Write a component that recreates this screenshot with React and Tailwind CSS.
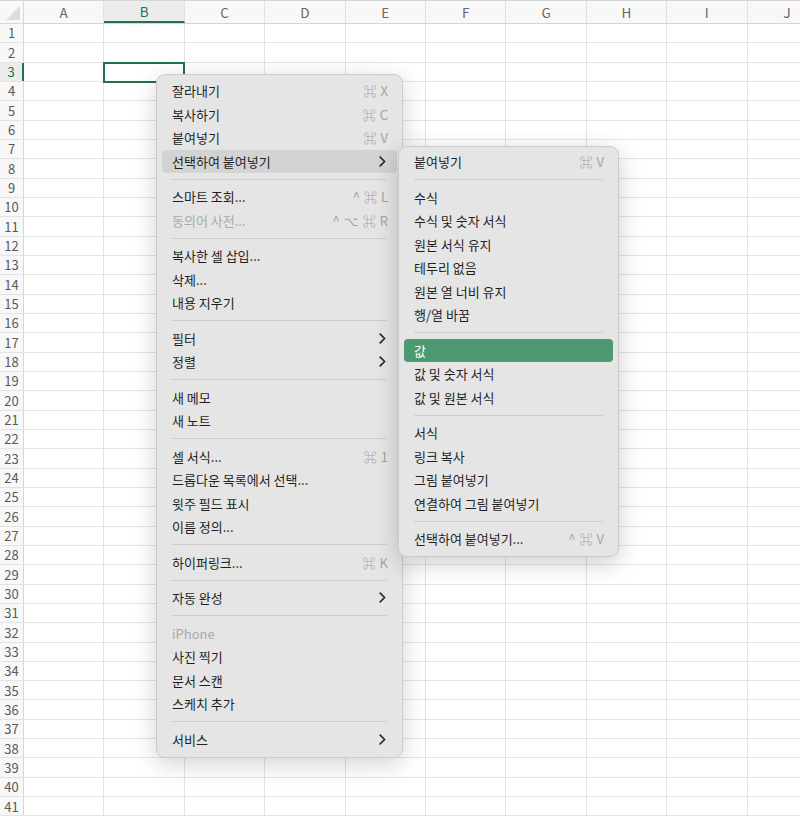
import React from 'react';

const COLS = ['A', 'B', 'C', 'D', 'E', 'F', 'G', 'H', 'I', 'J'];
const ROWS = Array.from({ length: 41 }, (_, i) => i + 1);

const FONT = { fontFamily: '"Noto Sans CJK KR", "DejaVu Sans", sans-serif' };

const Chevron = ({ white }) => (
  <svg width="7" height="11" viewBox="0 0 7 11" className="mr-[2px]">
    <polyline points="1.2,1.2 5.6,5.5 1.2,9.8" fill="none" stroke={white ? '#fff' : '#2a2a2a'} strokeWidth="1.7" strokeLinecap="round" strokeLinejoin="round" />
  </svg>
);

const Shortcut = ({ keys }) => (
  <span className="flex items-center gap-[4px] text-[13px] text-[#a3a3a3]">
    {keys.map((k, i) => (
      <span key={i}>{k}</span>
    ))}
  </span>
);

const Item = ({ label, sc, sub, disabled, active, green }) => (
  <div
    className={`h-[23.5px] mx-[5px] pl-[10px] pr-[9px] flex items-center justify-between rounded-[4px] text-[13px] ${
      green ? 'bg-[#4d9a72] text-white' : active ? 'bg-[#d3d3d3] text-[#1f1f1f]' : disabled ? 'text-[#a9a9a9]' : 'text-[#1f1f1f]'
    }`}
  >
    <span>{label}</span>
    {sc && <Shortcut keys={sc} />}
    {sub && <Chevron white={green} />}
  </div>
);

const Sep = () => (
  <div className="h-[12px] flex items-center px-[15px]">
    <div className="h-px w-full bg-[#cdcdcd]" />
  </div>
);

export default function App() {
  return (
    <div className="relative w-[800px] h-[816px] overflow-hidden bg-white select-none" style={FONT}>
      {/* column header */}
      <div className="flex h-[24px] border-t border-b border-[#d6d6d6] bg-[#f8f8f8]">
        <div className="w-[24px] shrink-0 border-r border-[#d6d6d6] relative">
          <div className="absolute right-[3px] bottom-[3px] w-0 h-0 border-l-[14px] border-l-transparent border-b-[14px] border-b-[#dcdcdc]" />
        </div>
        {COLS.map((c) => (
          <div
            key={c}
            className={`w-[80.4px] shrink-0 flex items-center justify-center text-[13.5px] border-r border-[#e0e0e0] ${
              c === 'B' ? 'bg-[#ececec] text-[#217346] border-b-2 border-b-[#217346]' : 'text-[#666]'
            }`}
          >
            {c}
          </div>
        ))}
      </div>

      {/* rows */}
      {ROWS.map((r) => (
        <div key={r} className="flex h-[19.33px] border-b border-[#e3e3e3]">
          <div
            className={`w-[24px] shrink-0 flex items-center justify-center text-[13px] border-r ${
              r === 3 ? 'bg-[#ececec] text-[#217346] border-r-2 border-r-[#217346]' : 'bg-[#f8f8f8] text-[#5a5a5a] border-[#d6d6d6]'
            }`}
          >
            {r}
          </div>
          {COLS.map((c) => (
            <div key={c} className="w-[80.4px] shrink-0 border-r border-[#e3e3e3]" />
          ))}
        </div>
      ))}

      {/* selected cell B3 */}
      <div className="absolute left-[103px] top-[62px] w-[82px] h-[21px] border-2 border-[#217346]" />

      {/* context menu */}
      <div className="absolute left-[156px] top-[74px] w-[247px] pt-[4px] pb-[6px] rounded-[9px] bg-[#e5e5e5] border border-[#cbcbcb] shadow-[0_6px_24px_rgba(0,0,0,0.18)]">
        <Item label="잘라내기" sc={['⌘', 'X']} />
        <Item label="복사하기" sc={['⌘', 'C']} />
        <Item label="붙여넣기" sc={['⌘', 'V']} />
        <Item label="선택하여 붙여넣기" sub active />
        <Sep />
        <Item label="스마트 조회..." sc={['^', '⌘', 'L']} />
        <Item label="동의어 사전..." sc={['^', '⌥', '⌘', 'R']} disabled />
        <Sep />
        <Item label="복사한 셀 삽입..." />
        <Item label="삭제..." />
        <Item label="내용 지우기" />
        <Sep />
        <Item label="필터" sub />
        <Item label="정렬" sub />
        <Sep />
        <Item label="새 메모" />
        <Item label="새 노트" />
        <Sep />
        <Item label="셀 서식..." sc={['⌘', '1']} />
        <Item label="드롭다운 목록에서 선택..." />
        <Item label="윗주 필드 표시" />
        <Item label="이름 정의..." />
        <Sep />
        <Item label="하이퍼링크..." sc={['⌘', 'K']} />
        <Sep />
        <Item label="자동 완성" sub />
        <Sep />
        <Item label="iPhone" disabled />
        <Item label="사진 찍기" />
        <Item label="문서 스캔" />
        <Item label="스케치 추가" />
        <Sep />
        <Item label="서비스" sub />
      </div>

      {/* submenu */}
      <div className="absolute left-[398px] top-[146px] w-[221px] pt-[3px] pb-[5px] rounded-[9px] bg-[#e5e5e5] border border-[#cbcbcb] shadow-[0_6px_24px_rgba(0,0,0,0.2)]">
        <Item label="붙여넣기" sc={['⌘', 'V']} />
        <Sep />
        <Item label="수식" />
        <Item label="수식 및 숫자 서식" />
        <Item label="원본 서식 유지" />
        <Item label="테두리 없음" />
        <Item label="원본 열 너비 유지" />
        <Item label="행/열 바꿈" />
        <Sep />
        <Item label="값" green />
        <Item label="값 및 숫자 서식" />
        <Item label="값 및 원본 서식" />
        <Sep />
        <Item label="서식" />
        <Item label="링크 복사" />
        <Item label="그림 붙여넣기" />
        <Item label="연결하여 그림 붙여넣기" />
        <Sep />
        <Item label="선택하여 붙여넣기..." sc={['^', '⌘', 'V']} />
      </div>
    </div>
  );
}
